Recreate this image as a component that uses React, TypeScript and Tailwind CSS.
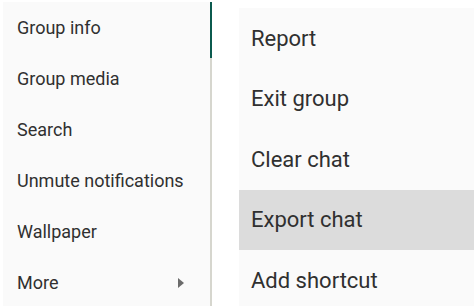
export default function App() {
  const left = [
    "Group info",
    "Group media",
    "Search",
    "Unmute notifications",
    "Wallpaper",
    "More",
  ];
  const right = ["Report", "Exit group", "Clear chat", "Export chat", "Add shortcut"];

  return (
    <div
      className="w-[474px] h-[306px] overflow-hidden bg-white flex"
      style={{ fontFamily: "Roboto, 'Noto Sans', sans-serif" }}
    >
      {/* left menu */}
      <div className="w-[212px] pt-[2px] pl-[3px] flex shrink-0">
        <div className="flex-1 bg-[#fafafa]">
          {left.map((item) => (
            <div
              key={item}
              className="h-[51px] pl-[14px] pr-[26px] flex items-center justify-between whitespace-nowrap text-[18px] text-[#303030]"
            >
              <span>{item}</span>
              {item === "More" && (
                <span className="w-0 h-0 border-y-[5px] border-y-transparent border-l-[6px] border-l-[#6b6b6b]" />
              )}
            </div>
          ))}
        </div>
        <div className="w-[3px] flex flex-col">
          <div className="h-[56px] bg-[#0b5a4e]" />
          <div className="flex-1 bg-[#d6d6ce]" />
        </div>
      </div>

      {/* right menu */}
      <div className="ml-[27px] mt-[8px] flex-1 bg-[#fafafa]">
        {right.map((item) => (
          <div
            key={item}
            className={`h-[60.5px] pl-[12px] flex items-center whitespace-nowrap text-[22px] text-[#303030] ${
              item === "Export chat" ? "bg-[#dcdcdc]" : ""
            }`}
          >
            {item}
          </div>
        ))}
      </div>
    </div>
  );
}
